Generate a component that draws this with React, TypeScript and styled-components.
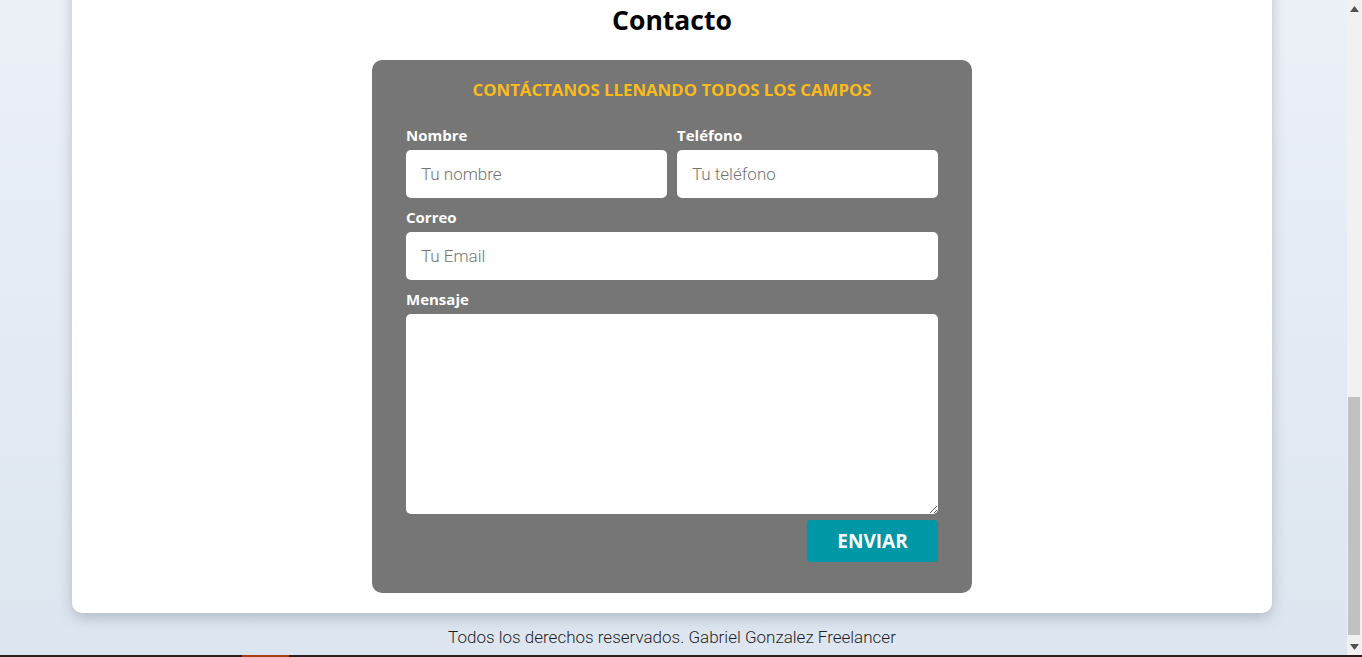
import React, { useLayoutEffect, useRef } from 'react';
import styled, { createGlobalStyle } from 'styled-components';

const GlobalStyle = createGlobalStyle`
  html, body {
    margin: 0;
    padding: 0;
    height: 100%;
    overflow: hidden;
  }

  body {
    font-family: Roboto, 'Liberation Sans', sans-serif;
  }

  * {
    box-sizing: border-box;
  }
`;

const App = () => {
  const scrollerRef = useRef<HTMLDivElement>(null);

  // the screenshot shows the page scrolled to the very bottom
  useLayoutEffect(() => {
    const el = scrollerRef.current;
    if (el) el.scrollTop = el.scrollHeight;
  }, []);

  return (
    <>
      <GlobalStyle />
      <Viewport>
        <Window>
          <Scroller ref={scrollerRef}>
            <MainCard>
              <PreviousSections />
              <SectionTitle>Contacto</SectionTitle>
              <ContactForm onSubmit={(e) => e.preventDefault()}>
                <FormTitle>CONTÁCTANOS LLENANDO TODOS LOS CAMPOS</FormTitle>
                <FieldRow>
                  <Field>
                    <Label htmlFor="nombre">Nombre</Label>
                    <Input id="nombre" type="text" placeholder="Tu nombre" />
                  </Field>
                  <Field>
                    <Label htmlFor="telefono">Teléfono</Label>
                    <Input id="telefono" type="tel" placeholder="Tu teléfono" />
                  </Field>
                </FieldRow>
                <Field>
                  <Label htmlFor="correo">Correo</Label>
                  <Input id="correo" type="email" placeholder="Tu Email" />
                </Field>
                <Field>
                  <Label htmlFor="mensaje">Mensaje</Label>
                  <TextArea id="mensaje" />
                </Field>
                <Actions>
                  <SubmitButton type="submit">ENVIAR</SubmitButton>
                </Actions>
              </ContactForm>
            </MainCard>
            <Footer>Todos los derechos reservados. Gabriel Gonzalez Freelancer</Footer>
          </Scroller>
          <ScrollRail aria-hidden>
            <ScrollArrow>
              <svg width="9" height="6" viewBox="0 0 9 6">
                <polygon points="0,6 9,6 4.5,0" fill="#505050" />
              </svg>
            </ScrollArrow>
            <ScrollTrack>
              <ScrollThumb />
            </ScrollTrack>
            <ScrollArrow>
              <svg width="9" height="6" viewBox="0 0 9 6">
                <polygon points="0,0 9,0 4.5,6" fill="#505050" />
              </svg>
            </ScrollArrow>
          </ScrollRail>
        </Window>
        <Taskbar>
          <TaskbarItem />
        </Taskbar>
      </Viewport>
    </>
  );
};

const Viewport = styled.div`
  height: 100vh;

  display: flex;
  flex-direction: column;
`;

const Window = styled.div`
  flex: 1;
  min-height: 0;

  display: flex;
`;

const Scroller = styled.div`
  flex: 1;
  overflow-y: scroll;
  scrollbar-width: none;

  padding-right: 3px;

  background: linear-gradient(180deg, #ecf1f8 0%, #e3eaf3 55%, #dde6f0 100%);

  &::-webkit-scrollbar {
    display: none;
  }
`;

const ScrollRail = styled.div`
  width: 15px;

  display: flex;
  flex-direction: column;

  background-color: #f1f1f1;
`;

const ScrollArrow = styled.div`
  height: 17px;
  flex-shrink: 0;

  display: flex;
  align-items: center;
  justify-content: center;
`;

const ScrollTrack = styled.div`
  flex: 1;

  display: flex;
  flex-direction: column;
  justify-content: flex-end;

  padding: 0 2px 3px 1px;
`;

const ScrollThumb = styled.div`
  height: 238px;

  background-color: #c1c1c1;
`;

const MainCard = styled.main`
  width: 1200px;

  margin: 20px auto 0;
  padding-bottom: 20px;

  display: flex;
  flex-direction: column;
  align-items: center;

  background-color: #ffffff;
  border-radius: 10px;
  box-shadow: 0 5px 14px rgba(60, 75, 95, 0.28);
`;

const PreviousSections = styled.div`
  width: 100%;
  height: 1035px;
`;

const SectionTitle = styled.h2`
  margin: 2px 0 23px;

  font-family: 'Open Sans', sans-serif;
  font-size: 26.5px;
  line-height: 33px;
  font-weight: 700;
  color: #000000;
`;

const ContactForm = styled.form`
  width: 600px;

  padding: 17px 34px 31px;

  display: flex;
  flex-direction: column;
  gap: 9px;

  background-color: #767676;
  border-radius: 10px;
`;

const FormTitle = styled.h3`
  margin: 0 0 13px;

  text-align: center;
  font-family: 'Open Sans', sans-serif;
  font-size: 16.8px;
  line-height: 26px;
  font-weight: 700;
  color: #fbbb1a;
`;

const FieldRow = styled.div`
  display: grid;
  grid-template-columns: 1fr 1fr;
  gap: 10px;
`;

const Field = styled.div`
  display: flex;
  flex-direction: column;
  gap: 5px;
`;

const Label = styled.label`
  font-family: 'Open Sans', sans-serif;
  font-size: 15px;
  line-height: 20px;
  font-weight: 700;
  color: #ffffff;
`;

const Input = styled.input`
  width: 100%;
  height: 48px;

  padding: 0 15px;

  border: none;
  border-radius: 5px;
  background-color: #ffffff;
  outline: none;

  font-family: Roboto, sans-serif;
  font-size: 17px;
  font-weight: 300;
  color: #333;

  &::placeholder {
    color: #737373;
  }
`;

const TextArea = styled.textarea`
  width: 100%;
  height: 200px;

  padding: 12px 15px;

  border: none;
  border-radius: 5px;
  background-color: #ffffff;
  outline: none;
  resize: vertical;

  font-family: Roboto, sans-serif;
  font-size: 17px;
`;

const Actions = styled.div`
  display: flex;
  justify-content: flex-end;

  margin-top: -3px;
`;

const SubmitButton = styled.button`
  width: 131px;
  height: 42px;

  border: none;
  border-radius: 4px;
  background-color: #0097a7;
  cursor: pointer;

  font-family: 'Open Sans', sans-serif;
  font-size: 19px;
  font-weight: 700;
  color: #ffffff;
`;

const Footer = styled.footer`
  padding: 14px 0 8px;

  text-align: center;
  font-family: Roboto, sans-serif;
  font-size: 17px;
  line-height: 20px;
  font-weight: 300;
  color: #1f1f1f;
`;

const Taskbar = styled.div`
  height: 2px;

  display: flex;

  background-color: #2b1d1d;
`;

const TaskbarItem = styled.div`
  width: 47px;

  margin-left: 242px;

  background-color: #a83c12;
`;

export default App;
